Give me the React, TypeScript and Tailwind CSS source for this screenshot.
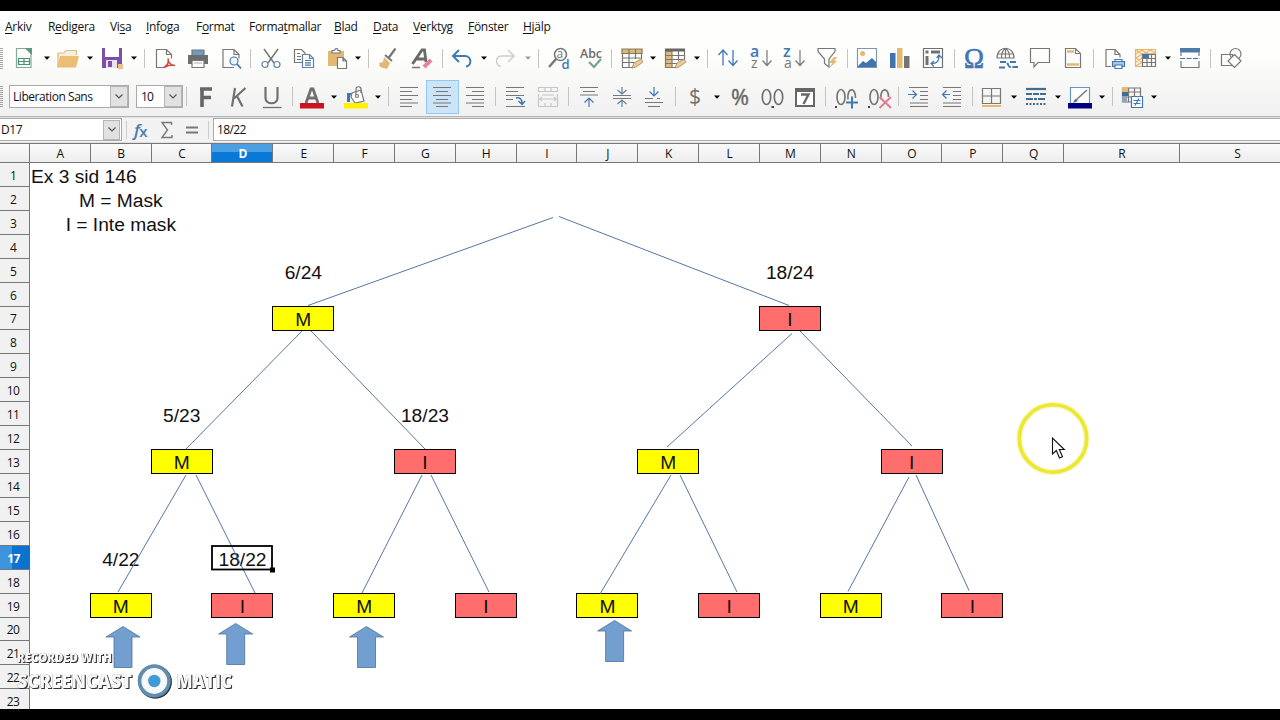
import type { ReactNode } from "react";
import clsx from "clsx";

const GREY = "#777777";
const BLUE = "#3f78b5";
const TAN = "#e5b871";

const MENU = [
	{ pre: "", key: "A", post: "rkiv", width: "w-[43px]" },
	{ pre: "R", key: "e", post: "digera", width: "w-[62px]" },
	{ pre: "Vi", key: "s", post: "a", width: "w-[36px]" },
	{ pre: "", key: "I", post: "nfoga", width: "w-[50px]" },
	{ pre: "F", key: "o", post: "rmat", width: "w-[53px]" },
	{ pre: "Forma", key: "t", post: "mallar", width: "w-[85px]" },
	{ pre: "", key: "B", post: "lad", width: "w-[39px]" },
	{ pre: "", key: "D", post: "ata", width: "w-[40px]" },
	{ pre: "", key: "V", post: "erktyg", width: "w-[55px]" },
	{ pre: "", key: "F", post: "önster", width: "w-[55px]" },
	{ pre: "", key: "H", post: "jälp", width: "w-[40px]" },
];

const COLUMNS = "ABCDEFGHIJKLMNOPQRS".split("");
const ROWS = Array.from({ length: 23 }, (_, i) => i + 1);

type Cell = { col: number; row: number; text: string; kind?: "M" | "I" };

const CELLS: Cell[] = [
	{ col: 2, row: 2, text: "M = Mask" },
	{ col: 2, row: 3, text: "I = Inte mask" },
	{ col: 5, row: 5, text: "6/24" },
	{ col: 13, row: 5, text: "18/24" },
	{ col: 5, row: 7, text: "M", kind: "M" },
	{ col: 13, row: 7, text: "I", kind: "I" },
	{ col: 3, row: 11, text: "5/23" },
	{ col: 7, row: 11, text: "18/23" },
	{ col: 3, row: 13, text: "M", kind: "M" },
	{ col: 7, row: 13, text: "I", kind: "I" },
	{ col: 11, row: 13, text: "M", kind: "M" },
	{ col: 15, row: 13, text: "I", kind: "I" },
	{ col: 2, row: 17, text: "4/22" },
	{ col: 4, row: 17, text: "18/22" },
	{ col: 2, row: 19, text: "M", kind: "M" },
	{ col: 4, row: 19, text: "I", kind: "I" },
	{ col: 6, row: 19, text: "M", kind: "M" },
	{ col: 8, row: 19, text: "I", kind: "I" },
	{ col: 10, row: 19, text: "M", kind: "M" },
	{ col: 12, row: 19, text: "I", kind: "I" },
	{ col: 14, row: 19, text: "M", kind: "M" },
	{ col: 16, row: 19, text: "I", kind: "I" },
];

// Branches of the probability tree: x1, y1, x2, y2
const BRANCHES = [
	[553, 217.5, 308, 305.5],
	[559, 216.5, 789, 305.5],
	[302, 331, 186, 449],
	[311, 331, 425, 449],
	[792, 333.5, 667, 447],
	[800, 331, 912, 446],
	[186, 475, 118, 592],
	[196, 475, 255, 593],
	[422, 475, 362, 593],
	[431, 475, 489, 592],
	[671, 475, 600, 594],
	[680, 475, 737, 592],
	[909, 477, 848, 591.5],
	[916, 475, 969, 590.5],
];

const ARROWS = [
	[123, 626.5],
	[235.7, 623.5],
	[366.5, 626.5],
	[614.6, 620.5],
];

function Ico({ gap, children }: { gap: string; children: ReactNode }) {
	return (
		<svg viewBox="0 0 22 22" fill="none" stroke={GREY} strokeWidth="1.2" className={clsx("h-[22px] w-[22px] shrink-0 overflow-visible", gap)}>
			{children}
		</svg>
	);
}

function Caret({ gap, dim }: { gap: string; dim?: boolean }) {
	return (
		<svg viewBox="0 0 6 4" className={clsx("h-1 w-1.5 shrink-0", gap)}>
			<path d="M0 .5h6L3 3.7z" fill={dim ? "#9b9b9b" : "#000"} />
		</svg>
	);
}

function Sep({ gap }: { gap: string }) {
	return <div className={clsx("h-[19px] w-px shrink-0 bg-[#c3c3c3]", gap)} />;
}

function Grip() {
	return (
		<div className="flex w-[3px] shrink-0 flex-col gap-px">
			{Array.from({ length: 11 }, (_, i) => (
				<div key={i} className="h-px bg-[#a5a5a5]" />
			))}
		</div>
	);
}

function DropButton({ className }: { className?: string }) {
	return (
		<div className={clsx("flex items-center justify-center border border-[#b5b5b5] bg-[#e1e1e1]", className)}>
			<svg viewBox="0 0 8 5" className="h-[5px] w-2" fill="none" stroke="#555" strokeWidth="1.2">
				<path d="M.5.5 4 4 7.5.5" />
			</svg>
		</div>
	);
}

function StandardBar() {
	return (
		<div className="flex h-[38px] items-center">
			<Grip />
			<Ico gap="ml-[10px]">
				<path d="M3.5 1.5H13l5 5v14h-14.5z" stroke="#83ab98" />
				<path d="M12 1h7v7z" fill="#5c9c7c" stroke="none" />
				<path d="M5.5 11.5h11v6h-11zM5.5 14.5h11M11 11.5v6" stroke="#4a9470" />
			</Ico>
			<Caret gap="ml-[9px]" />
			<Ico gap="ml-[7px]">
				<path d="M1 20V6h6l2-2.5h10.500V8" fill="#f8efdb" stroke="#d8bd8c" />
				<path d="M3 9h19l-3 11.500H0z" fill="#ebbe74" stroke="none" />
			</Ico>
			<Caret gap="ml-2" />
			<Ico gap="ml-2">
				<path d="M1 1h20v17l-3 3H1z" fill="#7d4fa5" stroke="none" />
				<path d="M4 1h14v9H4z" fill="#fff" stroke="none" />
				<path d="M5 13h11v8H5z" fill="#e9e2ef" stroke="none" />
				<path d="M7 14h4v6H7z" fill="#7d4fa5" stroke="none" />
				<path d="M17 17h5v5h-5z" fill="#eebf8a" stroke="none" />
			</Ico>
			<Caret gap="ml-2" />
			<Sep gap="ml-[7px]" />
			<Ico gap="ml-[9px]">
				<path d="M10 20.500H2.500v-18h10l5 5v4M12.500 2.500v5h5" />
				<path d="M10 20.500c4-3 5-5 4-9 0 4 3 7 7 7-3-1-7 0-11 2z" stroke="#cc4b40" strokeWidth="1.500" />
			</Ico>
			<Ico gap="ml-[11px]">
				<path d="M5 3h12v6H5z" fill="#6f9ac8" stroke={GREY} />
				<path d="M1 8h20v9H1z" fill="#6d6d6d" stroke="none" />
				<path d="M5 13.500h12v7H5z" fill="#fff" />
				<path d="M7 16h8" stroke="#bbb" />
			</Ico>
			<Ico gap="ml-[11px]">
				<path d="M14 20.500H3v-18h11l5 5v4M14 2.500v5h5" />
				<circle cx="14" cy="14" r="4" stroke={BLUE} fill="#edf4fb" />
				<path d="m17 17 4 4.500" stroke={BLUE} strokeWidth="1.800" />
			</Ico>
			<Sep gap="ml-2" />
			<Ico gap="ml-[9px]">
				<path d="m4 2 10 14M18 2 8 16" strokeWidth="1.500" />
				<circle cx="5" cy="17.500" r="3" stroke="#6282a4" />
				<circle cx="17" cy="17.500" r="3" stroke="#6282a4" />
			</Ico>
			<Ico gap="ml-[11px]">
				<path d="M9 15.500H1.500v-13h7l3.500 3.500v2M4 6.500h3M4 9.500h4M4 12.500h4" />
				<path d="M9.500 7.500h7l4 4v9h-11zM16.500 7.500v4h4" fill="#fff" stroke="#6282a4" />
				<path d="M12 13.500h6M12 15.800h6M12 18.200h6" stroke={BLUE} />
			</Ico>
			<Ico gap="ml-[11px]">
				<path d="M2 4h16v15H2z" fill="#e5b871" stroke="none" />
				<path d="M6 6V3.500h2.500C9 1 12 1 12 3.500h2V6z" fill="#fff" />
				<path d="M11.500 10.500h5.500l3.500 3.500v7.500h-9zM17 10.500V14h3.500" fill="#fff" />
			</Ico>
			<Caret gap="ml-[7px]" />
			<Sep gap="ml-[7px]" />
			<Ico gap="ml-2">
				<path d="m18.500 1.500-7 9.500" strokeWidth="2.200" />
				<path d="m8 8 7 6" strokeWidth="2" />
				<path d="m7 10 6 6-3 6-7-2-1-4 4-1z" fill={TAN} stroke="none" />
			</Ico>
			<Ico gap="ml-[11px]">
				<path d="M2.500 17 12 3h2.500l1.500 12M6 12h9" strokeWidth="2.800" stroke="#696969" />
				<path d="M2 20.500h8" strokeWidth="1.500" />
				<path d="m14 20 7-7" stroke="#e8839a" strokeWidth="4" />
			</Ico>
			<Sep gap="ml-[10px]" />
			<Ico gap="ml-2">
				<path d="M8 3 2 9l6 6M2 9h12c7 0 7 10 1 10.500" stroke={BLUE} strokeWidth="2" />
			</Ico>
			<Caret gap="ml-2" />
			<Ico gap="ml-[7px]">
				<path d="m14 3 6 6-6 6M20 9H8C1 9 1 19 7 19.500" stroke="#cdcdcd" strokeWidth="1.500" />
			</Ico>
			<Caret gap="ml-[9px]" dim />
			<Sep gap="ml-[7px]" />
			<Ico gap="ml-[9px]">
				<circle cx="12.500" cy="7.500" r="6" strokeWidth="1.600" />
				<path d="m8 12-7 8" strokeWidth="2.400" />
				<text x="8.500" y="11" fontSize="12" fontFamily="Open Sans" fill={GREY} stroke="none">a</text>
				<text x="13.500" y="21.500" fontSize="13" fontFamily="Open Sans" fontWeight="600" fill={BLUE} stroke="none">d</text>
			</Ico>
			<Ico gap="ml-[10px]">
				<text x="0" y="10.500" fontSize="12" fontWeight="600" fontFamily="Open Sans" fill="#6b6b6b" stroke="none" textLength="22" lengthAdjust="spacingAndGlyphs">Abc</text>
				<path d="m9 15 5 5 7-8" stroke="#6fa488" strokeWidth="2.200" />
			</Ico>
			<Sep gap="ml-[9px]" />
			<Ico gap="ml-[9px]">
				<path d="M1 2h20v4.500H1z" fill="#d8b97c" stroke="#8d7b56" />
				<path d="M1.500 6.500v14h10M1.500 11h18M1.500 15.500h12M8 2v18.500M14.500 2v10M20.500 6v6" />
				<path d="m11 21 2-5 7-4 2 3-7 5z" fill="#ebcb96" stroke="#a18150" strokeWidth=".8" />
			</Ico>
			<Caret gap="ml-[7px]" />
			<Ico gap="ml-2">
				<path d="M1 1.500h20v3H1z" fill="#666" stroke="none" />
				<path d="M1.500 4.500H8v16H1.500z" fill="#e0ba80" stroke="#8d7b56" />
				<path d="M1.500 8.500h19M1.500 12.500h19M1.500 16.500h12M8 20.500h4M14.500 4v10M20.500 4v9" />
				<path d="m11 21 2-5 7-4 2 3-7 5z" fill="#ebcb96" stroke="#a18150" strokeWidth=".8" />
			</Ico>
			<Caret gap="ml-2" />
			<Sep gap="ml-[7px]" />
			<Ico gap="ml-[9px]">
				<path d="M6 18.500V3M1.500 8 6 3l4.500 5M16 3v15.500M11.500 13.500l4.500 5 4.500-5" stroke={BLUE} strokeWidth="1.300" />
			</Ico>
			<Ico gap="ml-[11px]">
				<text x="0" y="10" fontSize="16" fontWeight="600" fontFamily="Open Sans" fill={BLUE} stroke="none">a</text>
				<text x="1" y="21" fontSize="14" fontFamily="Open Sans" fill={GREY} stroke="none">z</text>
				<path d="M17 3v15.500M12.500 13.500l4.500 5 4.500-5" />
			</Ico>
			<Ico gap="ml-[11px]">
				<text x="0" y="10" fontSize="16" fontWeight="600" fontFamily="Open Sans" fill={BLUE} stroke="none">z</text>
				<text x="1" y="21" fontSize="14" fontFamily="Open Sans" fill={GREY} stroke="none">a</text>
				<path d="M17 3v15.500M12.500 13.500l4.500 5 4.500-5" />
			</Ico>
			<Ico gap="ml-[11px]">
				<path d="M2 1.500h17v3l-6 7.500v8l-4.500-3.500V12L2 4.500z" />
				<path d="m18 10-5 6h3.500l-4 6 8.500-8h-3l3-4z" fill={TAN} stroke="none" />
			</Ico>
			<Sep gap="ml-[9px]" />
			<Ico gap="ml-2">
				<path d="M1.500 1.500h19v19h-19z" fill="#fff" stroke="#7f96ad" />
				<circle cx="6.500" cy="6.500" r="2.500" fill={TAN} stroke="none" />
				<path d="m2 19 5-5 3 2 6-5 4 4v5H2z" fill="#3f74b0" stroke="none" />
			</Ico>
			<Ico gap="ml-[11px]">
				<path d="M1 6h5.500v15H1z" fill="#3f74b0" stroke="none" />
				<path d="M8 1h5.500v20H8z" fill={TAN} stroke="none" />
				<path d="M15 9h5.500v12H15z" fill="#757575" stroke="none" />
			</Ico>
			<Ico gap="ml-[11px]">
				<path d="M1.500 1.500h19v19h-19z" fill="#fff" stroke="#707070" />
				<path d="M3.500 3.500h3v3h-3zM9 3.500h9v3H9zM3.500 9h3v9h-3z" fill="#707070" stroke="none" />
				<path d="M9 16.500c6 0 8-2 8-8M12 14l-3 2.500 3 3M14.500 11 17 8l3 3" stroke={BLUE} />
			</Ico>
			<Sep gap="ml-[10px]" />
			<Ico gap="ml-2">
				<text x="1" y="20.500" fontSize="29" fontFamily="Liberation Serif" fill={BLUE} stroke={BLUE} strokeWidth=".7" textLength="20" lengthAdjust="spacingAndGlyphs">Ω</text>
			</Ico>
			<Ico gap="ml-[11px]">
				<path d="M1 11c0-13 17-13 17 0zM2 7h15M9.500 1v10M5.500 11c0-4 1-8 4-9.500 3 1.500 4 5.500 4 9.500" />
				<path d="M4 15h6c2 0 2 5 4 5h8M14 15h7M3 20.500h7" stroke={BLUE} strokeWidth="2" strokeDasharray="6 1.500" />
			</Ico>
			<Ico gap="ml-[11px]">
				<path d="M1.500 1.500h19v14H9l-4 4.500v-4.500H1.500z" />
			</Ico>
			<Ico gap="ml-[11px]">
				<path d="M3.500 1.500h10l5 5v14h-15zM13.500 1.500v5h5" />
				<path d="M5 4.500h7M5 17.500h12" stroke={TAN} strokeWidth="2.500" />
			</Ico>
			<Sep gap="ml-[9px]" />
			<Ico gap="ml-[9px]">
				<path d="M8 19.500H3v-17h9l5 5v3M12 2.500v5h5" />
				<path d="M12 12.500h7v3h-7z" fill="#fff" stroke={BLUE} />
				<path d="M9.500 14.500h12v5h-12z" fill="#a9c7e6" stroke={BLUE} />
				<path d="M12 18h7v3.500h-7z" fill="#fff" stroke={BLUE} />
			</Ico>
			<Ico gap="ml-[10px]">
				<path d="M.5 2.500h20v4h-13v13h-7z" fill="#fdf3e2" stroke="#e6b46e" />
				<path d="m1 7 6-4 4 3 4-3 5 3M1 3l6 4-6 4 6 4-6 4M7 11l-6 4" stroke="#e6b46e" />
				<path d="M7.500 7.500h13v12h-13zM7.500 11.500h13M7.500 15.500h13M12 7.500v12M16.500 7.500v12" />
				<path d="M8 7h6v4H8z" fill="#4177b1" stroke="none" />
			</Ico>
			<Caret gap="ml-2" />
			<Ico gap="ml-2">
				<path d="M1 1h20v4.500H1z" fill="#4b7bab" stroke="none" />
				<path d="M2 5.500V9M20 5.500V9M2 14v6.500h18V14" />
				<path d="M1 11.500h20" stroke={BLUE} strokeDasharray="5 1.500" />
			</Ico>
			<Sep gap="ml-[9px]" />
			<Ico gap="ml-[9px]">
				<path d="M1.500 7.500h11v11h-11z" />
				<circle cx="15.500" cy="7" r="5.500" />
				<path d="m14.500 7.500 6.500 6.500-6.500 6.500L8 14z" fill="#fff" />
			</Ico>
		</div>
	);
}

function FormattingBar() {
	return (
		<div className="flex h-[39px] items-center">
			<Grip />
			<div className="ml-1.5 flex h-[23px] w-[120px] shrink-0 items-center border border-[#aaaaaa] bg-white pl-[3px]">
				<span className="flex-1 whitespace-nowrap pt-px text-[12px] tracking-[-0.45px]">Liberation Sans</span>
				<DropButton className="h-[21px] w-[18px]" />
			</div>
			<div className="ml-[7px] flex h-[23px] w-[47px] shrink-0 items-center border border-[#aaaaaa] bg-white pl-[4px]">
				<span className="flex-1 pt-px text-[12px] tracking-[-0.8px]">10</span>
				<DropButton className="h-[21px] w-[18px]" />
			</div>
			<Sep gap="ml-[3px]" />
			<Ico gap="ml-2">
				<path d="M7 21V3M5 3h12M7 11.500h9" stroke="#666" strokeWidth="3.600" />
			</Ico>
			<Ico gap="ml-[10px]">
				<path d="M8 2 5 20.500M18.500 2 7 12.500M10 10l5.500 10.500" stroke="#707070" strokeWidth="2.200" />
			</Ico>
			<Ico gap="ml-[11px]">
				<path d="M5.500 1v11c0 7 12 7 12 0V1" stroke="#707070" strokeWidth="2.200" />
				<path d="M3 21.500h18.500" stroke="#707070" strokeWidth="1.300" />
			</Ico>
			<Sep gap="ml-[10px]" />
			<Ico gap="ml-[7px]">
				<path d="m6 17 5-14h2l5 14M8 12h8" stroke="#707070" strokeWidth="2.800" />
				<path d="M0 17h24v5.500H0z" fill="#c9151e" stroke="none" />
			</Ico>
			<Caret gap="ml-[9px]" />
			<Ico gap="ml-2">
				<path d="M2 16V7h5l-2 3v6z" fill={BLUE} stroke="none" />
				<path d="m7 7 9-3 3 11-9 2-4-6z" fill="#fff" />
				<path d="M11 9V3c0-3 5-3 5 0v4" />
				<circle cx="12" cy="10" r="1.500" />
				<path d="M-1 17h24v5.500H-1z" fill="#fff200" stroke="none" />
			</Ico>
			<Caret gap="ml-2" />
			<Sep gap="ml-[7px]" />
			<Ico gap="ml-[9px]">
				<path d="M2 1.500h18M2 5.500h12M2 9.500h18M2 13.500h12M2 17h18M2 20.500h12" />
			</Ico>
			<div className="ml-1.5 flex h-[34px] w-[33px] shrink-0 items-center justify-center border border-[#90c8f6] bg-[#cce4f7]">
				<Ico gap="-ml-px">
					<path d="M2 1.500h18M5 5.500h12M2 9.500h18M5 13.500h12M2 17h18M5 20.500h12" />
				</Ico>
			</div>
			<Ico gap="ml-[5px]">
				<path d="M2 1.500h18M8 5.500h12M2 9.500h18M8 13.500h12M2 17h18M8 20.500h12" />
			</Ico>
			<Sep gap="ml-[9px]" />
			<Ico gap="ml-[9px]">
				<path d="M1 1.500h18M1 5.500h12M1 9.500h18M1 13.500h7M1 20.500h19" />
				<path d="M11 12c4-1 6 1 6 6M13.500 15l3.500 3.500 3-3.500" stroke={BLUE} strokeWidth="1.500" />
			</Ico>
			<Ico gap="ml-[10px]">
				<path d="M1.500 1.500h19v4h-19zM1.500 8v9M20.500 8v9M5 11l-2 2 2 2M17 11l2 2-2 2M3 13h16M5 9h12M1.500 17v3.500h19V17M8 1.500v4M14 1.500v4M8 17v4M14 17v4" stroke="#c6c6c6" />
			</Ico>
			<Sep gap="ml-[9px]" />
			<Ico gap="ml-[9px]">
				<path d="M2 1.500h18M5 5.500h12M2 9h18" />
				<path d="M11 21v-9M6.500 16.500 11 12l4.500 4.500" stroke={BLUE} />
			</Ico>
			<Ico gap="ml-[11px]">
				<path d="M2 9.500h18M2 12.500h18" />
				<path d="M11 1v7M6.500 4 11 8l4.500-4M11 21v-7M6.500 18l4.500-4 4.500 4" stroke="#63809e" />
			</Ico>
			<Ico gap="ml-[10px]">
				<path d="M2 12.500h8M14 12.500h3M2 16.500h18M5 20.500h12" />
				<path d="M11 1v9M6.500 5.500 11 10l4.500-4.500" stroke={BLUE} />
			</Ico>
			<Sep gap="ml-[10px]" />
			<Ico gap="ml-2">
				<text x="5" y="18" fontSize="21" fontFamily="Open Sans" fill="#707070" stroke="none">$</text>
			</Ico>
			<Caret gap="ml-2" />
			<Ico gap="ml-[9px]">
				<text x="2" y="18.500" fontSize="22" fontFamily="Open Sans" fill="#666" stroke="#666" strokeWidth=".4" textLength="18" lengthAdjust="spacingAndGlyphs">%</text>
			</Ico>
			<Ico gap="ml-[11px]">
				<ellipse cx="4.500" cy="11" rx="4.200" ry="7.500" stroke="#707070" strokeWidth="1.700" />
				<ellipse cx="16.500" cy="11" rx="4.200" ry="7.500" stroke="#707070" strokeWidth="1.700" />
				<path d="M9.500 20H12v2H9.500z" fill="#444" stroke="none" />
			</Ico>
			<Ico gap="ml-[11px]">
				<path d="M1 3h18v17H1z" fill="#fff" stroke="#666" strokeWidth="2" />
				<path d="M0 2h20v4H0z" fill="#666" stroke="none" />
				<path d="M6 8.500h7.500L8.500 18" stroke="#666" strokeWidth="2.400" />
			</Ico>
			<Sep gap="ml-[8px]" />
			<Ico gap="ml-[9px]">
				<ellipse cx="6" cy="11" rx="4" ry="7.500" strokeWidth="1.700" />
				<path d="M13 13.500C11.500 1 21 1 20.500 12" strokeWidth="1.700" />
				<path d="M0 20h2v2H0z" fill="#444" stroke="none" />
				<path d="M11 16.500h12M17 10.500v12" stroke={BLUE} strokeWidth="2" />
			</Ico>
			<Ico gap="ml-[11px]">
				<ellipse cx="6" cy="11" rx="4" ry="7.500" strokeWidth="1.700" />
				<path d="M13 13.500C11.500 1 21 1 20.500 11" strokeWidth="1.700" />
				<path d="M0 20h2v2H0z" fill="#444" stroke="none" />
				<path d="m11.500 11 11.500 11M23 11 11.500 22" stroke="#e17b94" strokeWidth="2" />
			</Ico>
			<Sep gap="ml-[8px]" />
			<Ico gap="ml-2">
				<path d="M2 1.500h19M13 5.500h8M13 9.500h8M13 13.500h8M3 17h18M3 20.500h18" />
				<path d="M1 8.500h8M5.500 4.500l4 4-4 4" stroke={BLUE} />
			</Ico>
			<Ico gap="ml-[11px]">
				<path d="M3 1.500h18M13 5.500h8M13 9.500h8M13 13.500h8M3 17h18M3 20.500h18" />
				<path d="M10 8.500H2M6.500 4.500l-4 4 4 4" stroke={BLUE} />
			</Ico>
			<Sep gap="ml-[10px]" />
			<Ico gap="ml-[7px]">
				<path d="M2.500 2.500h18v15h-18zM11.500 2.500v15M2.500 10h18" />
				<path d="M2 20h19" stroke={TAN} strokeWidth="2" />
			</Ico>
			<Caret gap="ml-[9px]" />
			<Ico gap="ml-2">
				<path d="M1 3h20" stroke="#426b96" strokeWidth="2.200" />
				<path d="M1 8h20" stroke="#426b96" strokeWidth="1.800" strokeDasharray="6 1" />
				<path d="M1 13h20" stroke="#426b96" strokeWidth="1.800" strokeDasharray="7 1 3 1" />
				<path d="M1 18h20" stroke="#426b96" strokeWidth="1.800" strokeDasharray="2 1.500" />
			</Ico>
			<Caret gap="ml-2" />
			<Ico gap="ml-2">
				<path d="M1.500 1.500h19v16h-19z" fill="#fff" stroke="#6595c2" />
				<path d="M18 4 7 14" strokeWidth="1.500" />
				<path d="m4 17 2-4 3 2z" fill="#426b96" stroke="none" />
				<path d="M-1 17h24v5.500H-1z" fill="#00007f" stroke="none" />
			</Ico>
			<Caret gap="ml-2" />
			<Sep gap="ml-[7px]" />
			<Ico gap="ml-2">
				<path d="M1.500 2h18v14h-18zM1.500 6h18M1.500 11h18M7.500 2v14M13.500 2v14" />
				<path d="M1 1h6v5H1z" fill={TAN} stroke="none" />
				<path d="M1 6h6v4H1z" fill="#426b96" stroke="none" />
				<path d="M1 10h5v6H1z" fill="#8da3ba" stroke="none" />
				<path d="M10.500 10.500h11v11h-11z" fill="#fff" stroke={BLUE} />
				<path d="M12.500 14.500h7M12.500 17.500h7M18 12.500l-4 7" stroke={BLUE} />
			</Ico>
			<Caret gap="ml-2" />
		</div>
	);
}

function FormulaBar() {
	return (
		<div className="flex h-[24px] shrink-0 bg-[#f2f2f2]">
			<div className="flex h-[23px] w-[122px] shrink-0 items-center border-y border-r border-[#aaaaaa] bg-white pl-px">
				<span className="flex-1 pt-px text-[12px] tracking-[-0.4px]">D17</span>
				<DropButton className="mr-px h-[20px] w-[17px]" />
			</div>
			<div className="flex flex-1 items-center">
				<div className="ml-1 h-[18px] w-px bg-[#cccccc]" />
				<span className="ml-[7px] w-[16px] pb-[2px] font-['Open_Sans'] text-[17px] font-semibold leading-none tracking-[-0.5px] text-[#4c7caf]">
					<span className="italic">f</span>
					<span className="relative top-px text-[15px]">x</span>
				</span>
				<svg viewBox="0 0 58 22" fill="none" stroke="#777" className="h-[22px] w-[58px]">
					<path d="M21.500 6V3.500h-9.500l5.500 7.500-5.500 7.500h10V16" strokeWidth="1.400" />
					<path d="M36 8.500h12M36 13.500h12" strokeWidth="2" />
				</svg>
				<div className="h-[18px] w-px bg-[#cccccc]" />
				<div className="ml-[4px] flex h-[23px] flex-1 items-center self-start border-y border-l border-[#aaaaaa] bg-white pl-[3px]">
					<span className="pt-px text-[12px] tracking-[-0.6px]">18/22</span>
				</div>
			</div>
		</div>
	);
}

function Sheet() {
	return (
		<div className="flex flex-1 overflow-hidden">
			<div className="grid w-[30px] shrink-0 auto-rows-[23.93px] border-r border-[#777777] bg-[#f1f1f1]">
				{ROWS.map((n) => (
					<div
						key={n}
						className={clsx(
							"flex items-center justify-center border-b border-[#777777] pr-[3px] pt-[3px] text-[12px] tracking-[-0.7px]",
							n === 17 && "-mr-px bg-linear-to-r from-[#3d93dc] from-40% to-[#0a72cf] to-40% font-bold text-white",
						)}
					>
						{n}
					</div>
				))}
			</div>
			<div className="grid flex-1 auto-cols-[60.83px] auto-rows-[23.93px] bg-white font-['Liberation_Sans',sans-serif] text-[19.2px] leading-none text-[#111111]">
				<div className="col-start-1 row-start-1 flex items-center whitespace-nowrap pl-px pt-[4px]">Ex 3 sid 146</div>
				{CELLS.map((c) => (
					<div
						key={`${c.col}-${c.row}`}
						style={{ gridColumn: c.col, gridRow: c.row }}
						className={clsx(
							"flex items-center justify-center whitespace-nowrap",
							c.kind ? "-ml-px -mt-px h-[25px] w-[62px] border border-black pt-[3px]" : "w-[60px] pt-[3px]",
							c.kind === "M" && "bg-[#ffff00]",
							c.kind === "I" && "bg-[#ff6d6d]",
						)}
					>
						{c.text}
					</div>
				))}
			</div>
		</div>
	);
}

// Shapes that float above the cells: branches, arrows and the cell cursor
function Drawing() {
	return (
		<svg viewBox="0 163 1280 546" className="pointer-events-none absolute left-0 top-0 h-[546px] w-[1280px]" fill="none">
			{BRANCHES.map(([x1, y1, x2, y2], i) => (
				<line key={i} x1={x1} y1={y1} x2={x2} y2={y2} stroke="#5576a5" strokeWidth="1" />
			))}
			{ARROWS.map(([x, y], i) => (
				<path key={i} d={`M${x} ${y}l17 10.500h-8v30.500h-18v-30.500h-8z`} fill="#729fcf" stroke="#49719f" strokeWidth=".8" />
			))}
			<rect x="212" y="546" width="60" height="23.500" stroke="#000" strokeWidth="1.800" />
			<rect x="270" y="567.500" width="5" height="5" fill="#000" />
		</svg>
	);
}

function Watermark() {
	return (
		<svg viewBox="0 0 236 56" className="absolute left-0 top-[486px] h-14 w-[236px] font-['Open_Sans',sans-serif] [filter:drop-shadow(1px_1px_0.500px_#333)_drop-shadow(0_0_0.600px_#777)]" fill="#f8f8f8" fontWeight="800">
			<text x="17" y="12.800" fontSize="12" textLength="95" lengthAdjust="spacingAndGlyphs">RECORDED WITH</text>
			<text x="17" y="39" fontSize="19" textLength="115" lengthAdjust="spacingAndGlyphs">SCREENCAST</text>
			<text x="176" y="39" fontSize="19" textLength="56" lengthAdjust="spacingAndGlyphs">MATIC</text>
			<circle cx="154.300" cy="32" r="14.700" stroke="#5d8fb5" strokeWidth="3.600" />
			<circle cx="154.300" cy="32" r="6.200" fill="#3f9ad6" />
		</svg>
	);
}

function Pointer() {
	return (
		<svg viewBox="0 0 80 80" className="absolute left-[1013px] top-[236px] h-20 w-20" fill="none">
			<circle cx="40" cy="39.500" r="33.700" stroke="#f4f08a" strokeWidth="6" opacity=".5" />
			<circle cx="40" cy="39.500" r="33.700" stroke="#ece72f" strokeWidth="3.600" />
			<path d="M39.500 39v16l3.800-3.500 3.200 7.500 3-1.300-3.200-7.200h5z" fill="#fff" stroke="#111" strokeWidth="1.100" />
		</svg>
	);
}

export default function App() {
	return (
		<div className="flex h-[720px] w-[1280px] flex-col overflow-hidden bg-black py-[11px] font-['Open_Sans','Noto_Sans',sans-serif] text-[#111111]">
			<div className="shrink-0 bg-linear-to-b from-[#fefefd] from-40% to-[#f0f0f0]">
				<nav className="flex h-7 items-center pl-[5px] pt-[3px] text-[12px] tracking-[-0.3px]">
					{MENU.map((m) => (
						<span key={m.pre + m.key + m.post} className={clsx("shrink-0 whitespace-nowrap", m.width)}>
							{m.pre}
							<span className="underline decoration-[#111111] decoration-1 underline-offset-2 [text-decoration-skip-ink:none]">{m.key}</span>
							{m.post}
						</span>
					))}
				</nav>
				<StandardBar />
				<FormattingBar />
			</div>
			<div className="h-[2px] shrink-0 border-t border-[#b5b5b5] bg-[#e0e0e0]" />
			<FormulaBar />
			<div className="h-px shrink-0 bg-[#e2e2e2]" />
			<div className="flex h-[20px] shrink-0 border-y border-[#777777] bg-linear-to-b from-[#fafafa] to-[#ededed] text-[12px]">
				<div className="w-[30px] shrink-0 border-r border-[#777777]" />
				<div className="grid flex-1 grid-cols-[repeat(17,60.83px)_115.500px_116px]">
					{COLUMNS.map((c) => (
						<div
							key={c}
							className={clsx(
								"flex items-center justify-center border-r border-[#777777] pl-px pt-[2px] leading-none",
								c === "D" && "bg-linear-to-b from-[#4ba0e4] from-45% to-[#0a78d7] to-45% font-bold text-white",
							)}
						>
							{c}
						</div>
					))}
				</div>
			</div>
			<main className="relative flex min-h-0 flex-1">
				<Sheet />
				<Drawing />
				<Watermark />
				<Pointer />
			</main>
		</div>
	);
}
